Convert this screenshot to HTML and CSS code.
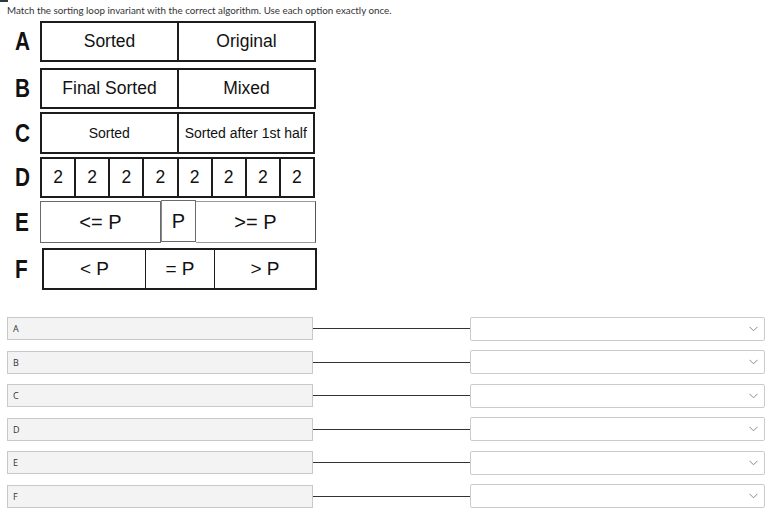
FILE: index.html
```html
<!DOCTYPE html>
<html>
<head>
<meta charset="utf-8">
<link rel="stylesheet" href="styles.css">
</head>
<body>
<div class="topbar"></div>
<p class="instr">Match the sorting loop invariant with the correct algorithm. Use each option exactly once.</p>

<div class="figure">
  <div class="frow ra">
    <div class="flabel"><span>A</span></div>
    <div class="tbl t17"><div class="cell">Sorted</div><div class="cell">Original</div></div>
  </div>
  <div class="frow rb">
    <div class="flabel"><span>B</span></div>
    <div class="tbl t17"><div class="cell">Final Sorted</div><div class="cell">Mixed</div></div>
  </div>
  <div class="frow rc">
    <div class="flabel"><span>C</span></div>
    <div class="tbl t14 narrow"><div class="cell">Sorted</div><div class="cell">Sorted after 1st half</div></div>
  </div>
  <div class="frow rd">
    <div class="flabel"><span>D</span></div>
    <div class="tbl t17 narrow">
      <div class="cell">2</div><div class="cell">2</div><div class="cell">2</div><div class="cell">2</div>
      <div class="cell">2</div><div class="cell">2</div><div class="cell">2</div><div class="cell">2</div>
    </div>
  </div>
  <div class="frow re">
    <div class="flabel"><span>E</span></div>
    <div class="etbl t20">
      <div class="ecell e1">&lt;= P</div>
      <div class="ecell e2">P</div>
      <div class="ecell e3">&gt;= P</div>
    </div>
  </div>
  <div class="frow rf">
    <div class="flabel"><span>F</span></div>
    <div class="tbl t19 ftbl">
      <div class="fcell f1">&lt; P</div>
      <div class="fcell f2">= P</div>
      <div class="fcell f3">&gt; P</div>
    </div>
  </div>
</div>

<div class="matches">
  <div class="mrow"><div class="mbox">A</div><div class="mline"></div><div class="msel"><svg class="chev" width="9" height="6" viewBox="0 0 9 6"><polyline points="0.5,0.8 4.5,4.8 8.5,0.8" fill="none" stroke="#8a8a8a" stroke-width="1"/></svg></div></div>
  <div class="mrow"><div class="mbox">B</div><div class="mline"></div><div class="msel"><svg class="chev" width="9" height="6" viewBox="0 0 9 6"><polyline points="0.5,0.8 4.5,4.8 8.5,0.8" fill="none" stroke="#8a8a8a" stroke-width="1"/></svg></div></div>
  <div class="mrow"><div class="mbox">C</div><div class="mline"></div><div class="msel"><svg class="chev" width="9" height="6" viewBox="0 0 9 6"><polyline points="0.5,0.8 4.5,4.8 8.5,0.8" fill="none" stroke="#8a8a8a" stroke-width="1"/></svg></div></div>
  <div class="mrow"><div class="mbox">D</div><div class="mline"></div><div class="msel"><svg class="chev" width="9" height="6" viewBox="0 0 9 6"><polyline points="0.5,0.8 4.5,4.8 8.5,0.8" fill="none" stroke="#8a8a8a" stroke-width="1"/></svg></div></div>
  <div class="mrow"><div class="mbox">E</div><div class="mline"></div><div class="msel"><svg class="chev" width="9" height="6" viewBox="0 0 9 6"><polyline points="0.5,0.8 4.5,4.8 8.5,0.8" fill="none" stroke="#8a8a8a" stroke-width="1"/></svg></div></div>
  <div class="mrow"><div class="mbox">F</div><div class="mline"></div><div class="msel"><svg class="chev" width="9" height="6" viewBox="0 0 9 6"><polyline points="0.5,0.8 4.5,4.8 8.5,0.8" fill="none" stroke="#8a8a8a" stroke-width="1"/></svg></div></div>
</div>
</body>
</html>
```

FILE: styles.css
```css
* { box-sizing: border-box; }
html, body { margin: 0; padding: 0; background: #fff; }
body { font-family: Lato, "Open Sans", sans-serif; color: #333; width: 765px; height: 512px; overflow: hidden; }

.topbar { width: 8px; height: 2px; background: #2f3a40; }

.instr {
  margin: 2px 0 0 7px;
  font-size: 9.8px;
  line-height: 12px;
  color: #333;
  white-space: nowrap;
}

.figure { margin-top: 5px; display: flex; flex-direction: column; }

.frow { display: flex; align-items: stretch; }
.ra { height: 41px; }
.rb { height: 41px; margin-top: 6px; }
.rc { height: 42px; margin-top: 3px; }
.rd { height: 41px; margin-top: 3px; }
.re { height: 42px; margin-top: 3px; }
.rf { height: 42px; margin-top: 5px; }

.flabel {
  width: 40px;
  padding-left: 15px;
  display: flex;
  align-items: center;
  font-family: "Liberation Sans", Arial, sans-serif;
  font-weight: bold;
  font-size: 26px;
  color: #111;
}
.flabel span { display: inline-block; transform: scaleX(0.8); transform-origin: left center; }

.tbl {
  width: 276px;
  display: flex;
  border: 2px solid #1c1c1c;
  font-family: "Liberation Sans", Arial, sans-serif;
  color: #111;
}
.tbl.narrow { width: 275px; }
.cell {
  flex: 1 1 0;
  display: flex;
  align-items: center;
  justify-content: center;
  white-space: nowrap;
  padding-bottom: 1px;
}
.cell + .cell { border-left: 2px solid #1c1c1c; }
.t14 { font-size: 14px; }
.t17 { font-size: 17.5px; }
.t19 { font-size: 19px; }
.t20 { font-size: 20px; }

.etbl {
  display: flex;
  font-family: "Liberation Sans", Arial, sans-serif;
  color: #111;
}
.ecell {
  display: flex;
  align-items: center;
  justify-content: center;
  border: 1.5px solid #6a6a6a;
}
.e1 { width: 121px; }
.e2 { width: 35px; margin-top: -1px; height: 42px; border-left-color: #888; }
.e3 { width: 120px; border-left: none; border-color: #9a9a9a; border-right-color: #555; }

.ftbl { margin-left: 2px; width: 275px; }
.fcell {
  display: flex;
  align-items: center;
  justify-content: center;
  white-space: nowrap;
}
.fcell + .fcell { border-left: 1.5px solid #1c1c1c; }
.f1 { width: 101px; }
.f2 { width: 69px; }
.f3 { flex: 1; }

.matches {
  margin-top: 27px;
  display: flex;
  flex-direction: column;
  gap: 10.6px;
}
.mrow { display: flex; align-items: center; height: 23px; }
.mbox {
  margin-left: 7px;
  width: 306px;
  height: 23px;
  background: #f3f3f3;
  border: 1px solid #c9c9c9;
  font-family: "Open Sans", Lato, sans-serif;
  font-size: 9px;
  color: #333;
  display: flex;
  align-items: center;
  padding-left: 5px;
}
.mline { width: 157px; height: 1px; background: #2d3539; }
.msel {
  width: 295px;
  height: 24px;
  background: #fff;
  border: 1px solid #cbcbcb;
  border-radius: 2px;
  display: flex;
  align-items: center;
  justify-content: flex-end;
  padding-right: 6px;
}
.chev { display: block; }
```
